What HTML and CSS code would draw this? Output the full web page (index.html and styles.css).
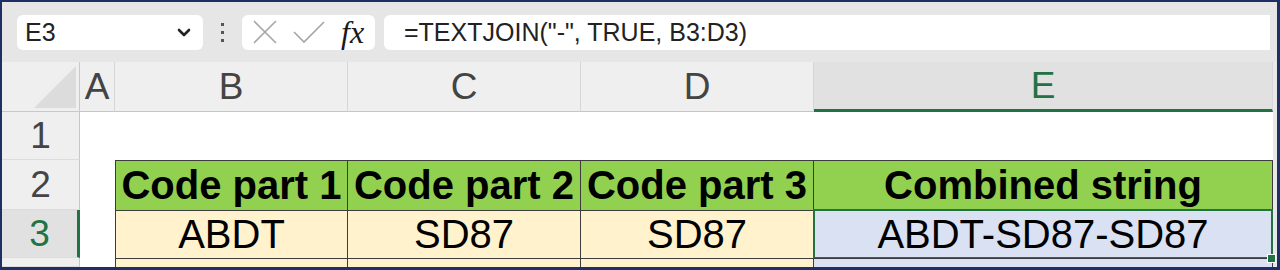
FILE: index.html
```html
<!DOCTYPE html>
<html lang="en">
  <head>
    <title>TEXTJOIN</title>
    <meta name="viewport" content="width=device-width, initial-scale=1">
    <link rel="stylesheet" href="styles.css">
  </head>
  <body>
    <div class="window">
      <div class="toolbar">
        <div class="namebox">
          <span>E3</span>
          <svg class="chevron" width="14" height="10" viewBox="0 0 14 10">
            <path d="M2 2 L7 7 L12 2" fill="none" stroke="#222" stroke-width="2.6" stroke-linecap="round" stroke-linejoin="round"/>
          </svg>
        </div>
        <div class="grip">
          <span></span><span></span><span></span>
        </div>
        <div class="fx-buttons">
          <svg width="26" height="26" viewBox="0 0 26 26">
            <path d="M2 2 L24 24 M24 2 L2 24" stroke="#a6a6a6" stroke-width="1.6" fill="none"/>
          </svg>
          <svg width="32" height="26" viewBox="0 0 32 26">
            <path d="M1 13 L11 23 L31 3" stroke="#a6a6a6" stroke-width="1.6" fill="none"/>
          </svg>
          <span class="fx">fx</span>
        </div>
        <div class="formula">=TEXTJOIN("-", TRUE, B3:D3)</div>
      </div>
      <div class="sheet">
        <div class="corner"><div class="triangle"></div></div>
        <div class="col-head">A</div>
        <div class="col-head">B</div>
        <div class="col-head">C</div>
        <div class="col-head">D</div>
        <div class="col-head active">E</div>
        <div class="col-head rest"></div>

        <div class="row-head">1</div>
        <div class="cell"></div>
        <div class="cell"></div>
        <div class="cell"></div>
        <div class="cell"></div>
        <div class="cell"></div>
        <div class="cell rest"></div>

        <div class="row-head">2</div>
        <div class="cell"></div>
        <div class="cell head first">Code part 1</div>
        <div class="cell head">Code part 2</div>
        <div class="cell head">Code part 3</div>
        <div class="cell head">Combined string</div>
        <div class="cell rest"></div>

        <div class="row-head active">3</div>
        <div class="cell"></div>
        <div class="cell data first">ABDT</div>
        <div class="cell data">SD87</div>
        <div class="cell data">SD87</div>
        <div class="cell data result">ABDT-SD87-SD87<span class="handle"></span></div>
        <div class="cell rest"></div>

        <div class="row-head"></div>
        <div class="cell"></div>
        <div class="cell data first"></div>
        <div class="cell data"></div>
        <div class="cell data"></div>
        <div class="cell data next"></div>
        <div class="cell rest"></div>
      </div>
    </div>
  </body>
</html>
```

FILE: styles.css
```css
html, body {
  margin: 0;
  padding: 0;
}
body {
  font-family: "Liberation Sans", Arial, sans-serif;
  background-color: #fff;
}
.window {
  width: 1280px;
  height: 270px;
  box-sizing: border-box;
  border: 2px solid #1f2f66;
  border-right-width: 3px;
  border-bottom-width: 3px;
  display: flex;
  flex-direction: column;
  overflow: hidden;
}
.toolbar {
  height: 60px;
  background-color: #e6e6e6;
  display: flex;
  align-items: center;
  padding: 0 7px 0 15px;
  flex-shrink: 0;
}
.namebox {
  width: 186px;
  height: 35px;
  box-sizing: border-box;
  background: #fff;
  border-radius: 6px;
  display: flex;
  align-items: center;
  justify-content: space-between;
  padding: 0 12px 0 8px;
  font-size: 25px;
  color: #222;
}
.chevron {
  margin-top: 2px;
}
.grip {
  width: 39px;
  display: flex;
  flex-direction: column;
  align-items: center;
  gap: 5px;
}
.grip span {
  width: 3px;
  height: 3px;
  background: #555;
}
.fx-buttons {
  width: 133px;
  height: 35px;
  box-sizing: border-box;
  background: #fff;
  border-radius: 6px;
  display: flex;
  align-items: center;
  padding: 0 0 0 10px;
  gap: 15px;
}
.fx {
  font-family: "Liberation Serif", "Times New Roman", serif;
  font-style: italic;
  font-size: 32px;
  color: #1a1a1a;
  margin-left: 1px;
  line-height: 1;
}
.formula {
  flex: 1;
  height: 35px;
  margin-left: 9px;
  box-sizing: border-box;
  background: #fff;
  border-radius: 6px 0 0 6px;
  display: flex;
  align-items: center;
  padding-left: 20px;
  font-size: 25px;
  color: #222;
}
.sheet {
  flex: 1;
  display: grid;
  grid-template-columns: 78px 35px 233px 233px 233px 459px 1fr;
  grid-template-rows: 50px 48px 50px 48px 1fr;
}
.corner {
  background: #efefef;
  border-right: 1px solid #c8c8c8;
  border-bottom: 1px solid #c8c8c8;
  display: flex;
  align-items: flex-end;
  justify-content: flex-end;
  padding: 0 3px 3px 0;
}
.triangle {
  width: 0;
  height: 0;
  border-left: 42px solid transparent;
  border-bottom: 42px solid #dcdcdc;
}
.col-head {
  background: #efefef;
  border-right: 1px solid #d6d6d6;
  border-bottom: 1px solid #c6c6c6;
  font-size: 37px;
  color: #444;
  display: flex;
  align-items: center;
  justify-content: center;
}
.col-head.active {
  background: #e1e1e1;
  color: #217346;
  border-bottom: 3px solid #217346;
}
.col-head.rest {
  background: #e8e8e8;
  border: none;
}
.row-head {
  background: #efefef;
  border-right: 1px solid #c6c6c6;
  border-bottom: 1px solid #dcdcdc;
  font-size: 37px;
  color: #444;
  display: flex;
  align-items: center;
  justify-content: center;
}
.row-head.active {
  background: #e1e1e1;
  color: #217346;
  border-right: 3px solid #217346;
}
.cell {
  background: #fff;
  display: flex;
  align-items: center;
  justify-content: center;
  font-size: 40px;
  color: #000;
  position: relative;
}
.cell.rest {
  background: #e8e8e8;
}
.cell.head {
  background: #92d050;
  font-weight: bold;
  border-top: 1px solid #3c3c3c;
  border-right: 1px solid #3c3c3c;
}
.cell.data {
  background: #fff2cc;
  border-top: 1px solid #3c3c3c;
  border-right: 1px solid #3c3c3c;
}
.cell.first {
  border-left: 1px solid #3c3c3c;
}
.cell.result {
  background: #d9e1f2;
}
.cell.next {
  background: #d9e1f2;
}
.result::after {
  content: "";
  position: absolute;
  left: -1px;
  top: -2px;
  right: -1px;
  bottom: -1px;
  border: 2px solid #217346;
}
.handle {
  position: absolute;
  right: -4px;
  bottom: -5px;
  width: 7px;
  height: 7px;
  background: #217346;
  border: 1px solid #fff;
  z-index: 2;
}
```
